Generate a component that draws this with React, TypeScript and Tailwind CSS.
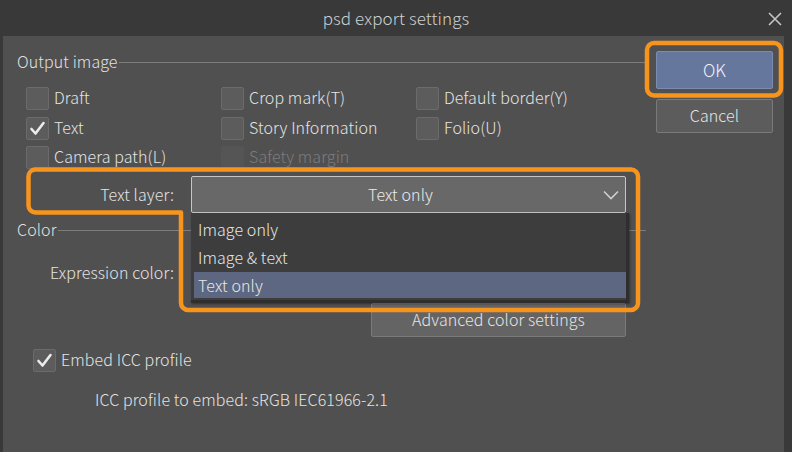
import React from 'react';

const font = { fontFamily: '"Noto Sans CJK JP", "Noto Sans", sans-serif' };

function CheckBox({ label, checked, disabled }: { label: string; checked?: boolean; disabled?: boolean }) {
  return (
    <div className="flex h-[23px] items-center gap-[5px]">
      <div
        className={
          disabled
            ? 'h-[23px] w-[23px] rounded-[2px] bg-[#555555]'
            : 'flex h-[23px] w-[23px] items-center justify-center rounded-[2px] border border-[#6b6b6b] bg-[#5c5c5c]'
        }
      >
        {checked && (
          <svg width="17" height="17" viewBox="0 0 17 17">
            <path d="M2.5 9 L6.5 13.5 L14.5 3" fill="none" stroke="#ececec" strokeWidth="2.6" strokeLinecap="round" strokeLinejoin="round" />
          </svg>
        )}
      </div>
      <span className={disabled ? 'pb-[3px] text-[#7c7c7c]' : 'pb-[3px] text-[#e4e4e4]'}>{label}</span>
    </div>
  );
}

function SectionHeader({ title, pad }: { title: string; pad: string }) {
  return (
    <div className={`flex h-[20px] items-center ${pad}`}>
      <span className="pb-[2px] text-[#e2e2e2]">{title}</span>
      <div className="ml-[1px] h-px flex-1 bg-[#7d7d7d]" />
    </div>
  );
}

export default function App() {
  return (
    <div className="relative flex h-[452px] w-[792px] flex-col bg-[#393939] text-[16px] font-light tracking-[0.1px]" style={font}>
      <div className="relative flex h-[36px] shrink-0 items-center justify-center">
        <span className="text-[17px] text-[#cfcfcf]">psd export settings</span>
        <svg className="absolute right-[10px] top-[12px]" width="14" height="14" viewBox="0 0 14 14">
          <path d="M1 1 L13 13 M13 1 L1 13" stroke="#c4c4c4" strokeWidth="1.6" />
        </svg>
      </div>

      <div className="relative ml-[3px] mr-[8px] flex flex-1 bg-[#505050]">
        <div className="flex w-[643px] flex-col">
          <div className="mt-[16px]">
            <SectionHeader title="Output image" pad="pl-[14px]" />
          </div>

          <div className="mt-[15px] grid grid-cols-[195px_195px_195px] gap-y-[6.5px] pl-[23px]">
            <CheckBox label="Draft" />
            <CheckBox label="Crop mark(T)" />
            <CheckBox label="Default border(Y)" />
            <CheckBox label="Text" checked />
            <CheckBox label="Story Information" />
            <CheckBox label="Folio(U)" />
            <CheckBox label="Camera path(L)" />
            <CheckBox label="Safety margin" disabled />
          </div>

          <div className="mt-[7px] flex h-[37px] items-center">
            <div className="w-[172px] pb-[2px] pr-[1px] text-right text-[#e4e4e4]">Text layer:</div>
            <div className="ml-[16px] flex h-[37px] w-[435px] items-center rounded-[2px] border border-[#c6c6c6] bg-[#686868]">
              <span className="flex-1 pb-[2px] pl-[6px] text-center text-[#ececec]">Text only</span>
              <svg className="mr-[6px]" width="16" height="10" viewBox="0 0 16 10">
                <path d="M1 1.5 L8 8.5 L15 1.5" fill="none" stroke="#cfcfcf" strokeWidth="1.6" />
              </svg>
            </div>
          </div>

          <div className="mt-[7px]">
            <SectionHeader title="Color" pad="pl-[14px]" />
          </div>

          <div className="mt-[15px] flex h-[36px] items-center">
            <div className="w-[172px] pb-[2px] pr-[1px] text-right text-[#e4e4e4]">Expression color:</div>
            <div className="ml-[16px] h-[36px] w-[435px] rounded-[2px] border border-[#8a8a8a] bg-[#646464]" />
          </div>

          <div className="mt-[12px] flex justify-end pr-[20px]">
            <div className="flex h-[34px] w-[255px] items-center justify-center rounded-[2px] border border-[#7a7a7a] bg-[#646464] pb-[2px] text-[#e6e6e6]">
              Advanced color settings
            </div>
          </div>

          <div className="mt-[12px] pl-[30px]">
            <CheckBox label="Embed ICC profile" checked />
          </div>

          <div className="mt-[15px] pl-[92px] text-[#e4e4e4]">ICC profile to embed: sRGB IEC61966-2.1</div>
        </div>

        <div className="ml-[10px] flex flex-col gap-[10px] pt-[15px]">
          <div className="flex h-[38px] w-[117px] items-center justify-center rounded-[2px] border border-[#7c8cb0] bg-[#66779e] pb-[1px] text-[17px] text-[#eef0f6]">
            OK
          </div>
          <div className="flex h-[34px] w-[117px] items-center justify-center rounded-[2px] border border-[#7a7a7a] bg-[#5c5c5c] pb-[2px] text-[#e6e6e6]">
            Cancel
          </div>
        </div>

        <div className="absolute left-[188px] top-[177px] flex h-[90px] w-[438px] flex-col border-r-[3px] border-b-[3px] border-[#2e2e2e] bg-[#3d3d3d] pt-[3px] text-[#e8e8e8] shadow-[1px_1px_2px_rgba(0,0,0,0.4)]">
          <div className="flex h-[28px] items-center pb-[2px] pl-[7px]">Image only</div>
          <div className="flex h-[28px] items-center pb-[2px] pl-[7px]">Image &amp; text</div>
          <div className="ml-[3px] flex h-[26px] items-center bg-[#5d6781] pb-[1px] pl-[4px]">Text only</div>
        </div>
      </div>

      <svg className="pointer-events-none absolute left-0 top-0" width="792" height="452" viewBox="0 0 792 452">
        <path
          d="M35 169.5 H631 A7 7 0 0 1 638 176.5 V303 A7 7 0 0 1 631 310 H188 A7 7 0 0 1 181 303 V212.5 H35.5 A7 7 0 0 1 28.5 205.5 V176.5 A7 7 0 0 1 35 169.5 Z"
          fill="none"
          stroke="#f7941d"
          strokeWidth="4.5"
          strokeLinejoin="round"
        />
        <rect x="647" y="43" width="134" height="52.5" rx="7" fill="none" stroke="#f7941d" strokeWidth="4.5" />
      </svg>
    </div>
  );
}
